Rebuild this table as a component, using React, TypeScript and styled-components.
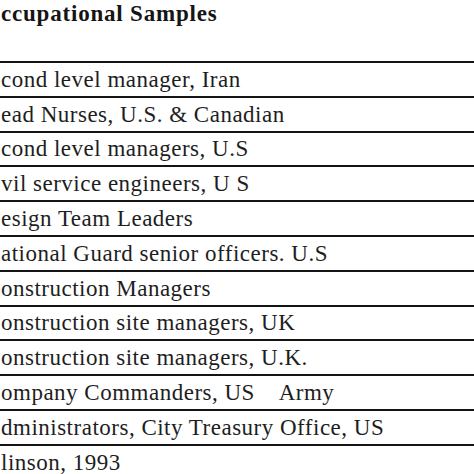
import React from "react";
import styled, { createGlobalStyle } from "styled-components";

const GlobalStyle = createGlobalStyle`
  html, body {
    margin: 0;
    padding: 0;
    background: #ffffff;
    overflow: hidden;
  }
`;

const Page = styled.div`
  width: 474px;
  height: 474px;
  overflow: hidden;
  background: #ffffff;
  font-family: "Liberation Serif", "Times New Roman", serif;
  color: #1e1e1e;
`;

const Title = styled.div`
  box-sizing: border-box;
  height: 61px;
  padding: 2px 0 0 1px;
  font-size: 23px;
  line-height: 24px;
  font-weight: bold;
  letter-spacing: 0.8px;
  color: #151515;
`;

const Rows = styled.div`
  display: flex;
  flex-direction: column;
`;

const Row = styled.div`
  box-sizing: border-box;
  height: 34.8px;
  flex: 0 0 34.8px;
  display: flex;
  align-items: center;
  padding-left: 1px;
  border-top: 2px solid #141414;
  font-size: 23px;
  line-height: 25px;
  letter-spacing: 0.5px;
  white-space: pre;
`;

const samples = [
  "cond level manager, Iran",
  "ead Nurses, U.S. & Canadian",
  "cond level managers, U.S",
  "vil service engineers, U S",
  "esign Team Leaders",
  "ational Guard senior officers. U.S",
  "onstruction Managers",
  "onstruction site managers, UK",
  "onstruction site managers, U.K.",
  "ompany Commanders, US    Army",
  "dministrators, City Treasury Office, US",
  "linson, 1993",
];

export default function App() {
  return (
    <>
      <GlobalStyle />
      <Page>
        <Title>ccupational Samples</Title>
        <Rows>
          {samples.map((s, i) => (
            <Row key={i}>{s}</Row>
          ))}
        </Rows>
      </Page>
    </>
  );
}
